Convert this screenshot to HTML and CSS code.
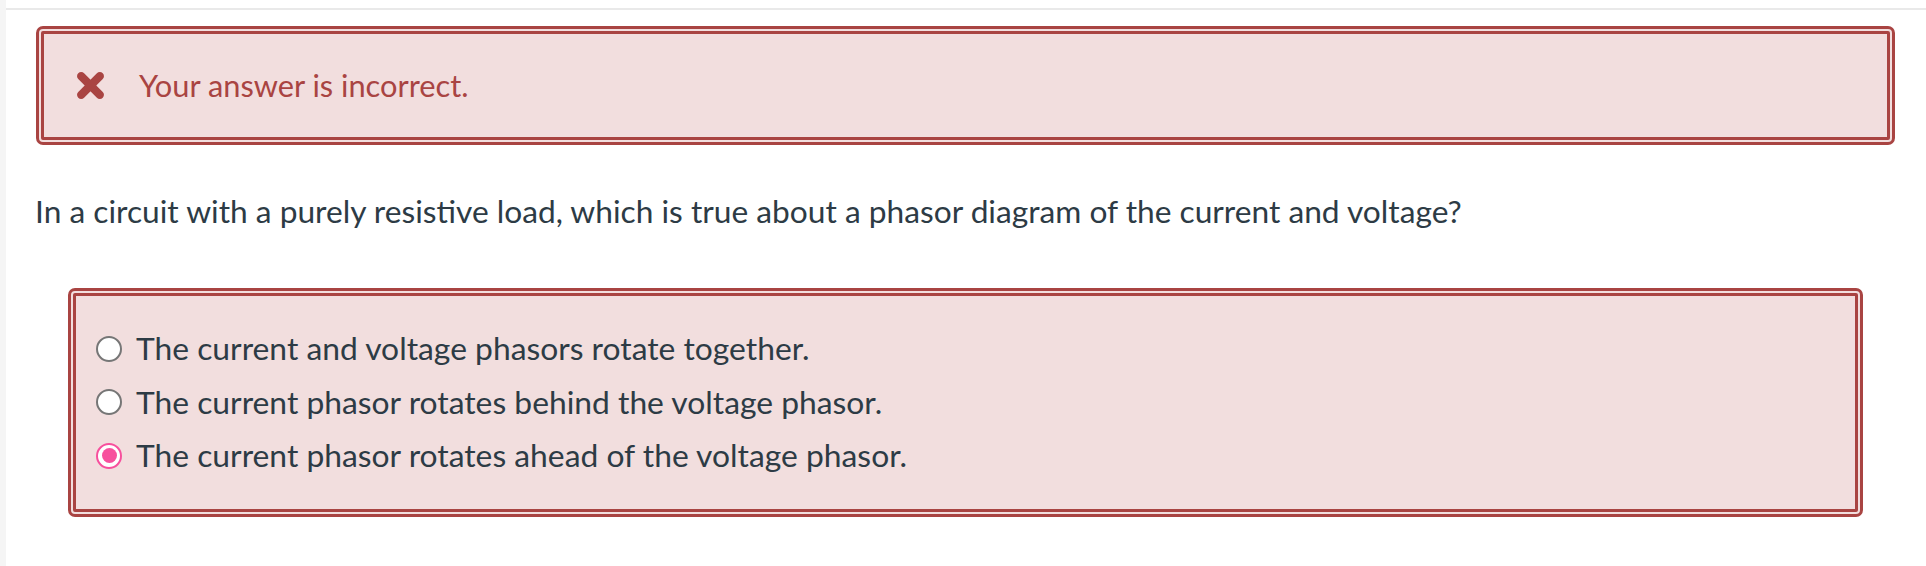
FILE: index.html
```html
<!DOCTYPE html>
<html lang="en">
<head>
<meta charset="utf-8">
<title>Quiz question</title>
<link rel="stylesheet" href="styles.css">
</head>
<body>
<div class="page">
  <div class="side"></div>
  <main class="main">
    <div class="alert">
      <svg class="alert-icon" viewBox="0 0 28 28" width="29" height="29" aria-hidden="true">
        <path d="M5 5 L23 23 M23 5 L5 23" stroke="#a94442" stroke-width="8" stroke-linecap="round" fill="none"/>
      </svg>
      <span class="alert-text">Your answer is incorrect.</span>
    </div>
    <p class="question">In a circuit with a purely resistive load, which is true about a phasor diagram of the current and voltage?</p>
    <div class="answers">
      <label class="option"><span class="radio"></span><span class="opt-text">The current and voltage phasors rotate together.</span></label>
      <label class="option"><span class="radio"></span><span class="opt-text">The current phasor rotates behind the voltage phasor.</span></label>
      <label class="option"><span class="radio checked"></span><span class="opt-text">The current phasor rotates ahead of the voltage phasor.</span></label>
    </div>
  </main>
</div>
</body>
</html>
```

FILE: styles.css
```css
html, body {
  margin: 0;
  padding: 0;
  background: #ffffff;
}
body {
  font-family: Lato, "Open Sans", "Liberation Sans", sans-serif;
  color: #2d3b45;
  height: 566px;
  overflow: hidden;
}
.page {
  display: flex;
  height: 100%;
}
.side {
  width: 6px;
  flex: none;
  background: #f5f5f5;
}
.main {
  flex: 1;
  margin-top: 8px;
  border-top: 2px solid #e9e9e9;
  padding-left: 29px;
}
.alert {
  margin: 16px 31px 0 1px;
  height: 103px;
  border: 8px double #a94442;
  border-radius: 7px;
  background: #f2dede;
  display: flex;
  align-items: center;
  padding-left: 32px;
  box-sizing: content-box;
}
.alert-icon {
  flex: none;
  display: block;
}
.alert-text {
  margin-left: 34px;
  font-size: 30.8px;
  line-height: 36px;
  color: #a94442;
}
.question {
  margin: 48px 0 0 0;
  font-size: 31.7px;
  line-height: 36px;
}
.answers {
  margin: 59px 63px 0 33px;
  border: 8px double #a94442;
  border-radius: 7px;
  background: #f2dede;
  padding: 26px 20px 26px 20px;
}
.option {
  display: flex;
  align-items: center;
  height: 53.5px;
  font-size: 31.8px;
  line-height: 53.5px;
}
.radio {
  flex: none;
  width: 26px;
  height: 26px;
  box-sizing: border-box;
  border-radius: 50%;
  border: 2px solid #767676;
  background: #ffffff;
  margin-right: 14px;
  position: relative;
}
.radio.checked {
  border: 2.5px solid #f7509d;
}
.radio.checked::after {
  content: "";
  position: absolute;
  left: 50%;
  top: 50%;
  width: 15px;
  height: 15px;
  margin: -7.5px 0 0 -7.5px;
  border-radius: 50%;
  background: #f7509d;
}
```
